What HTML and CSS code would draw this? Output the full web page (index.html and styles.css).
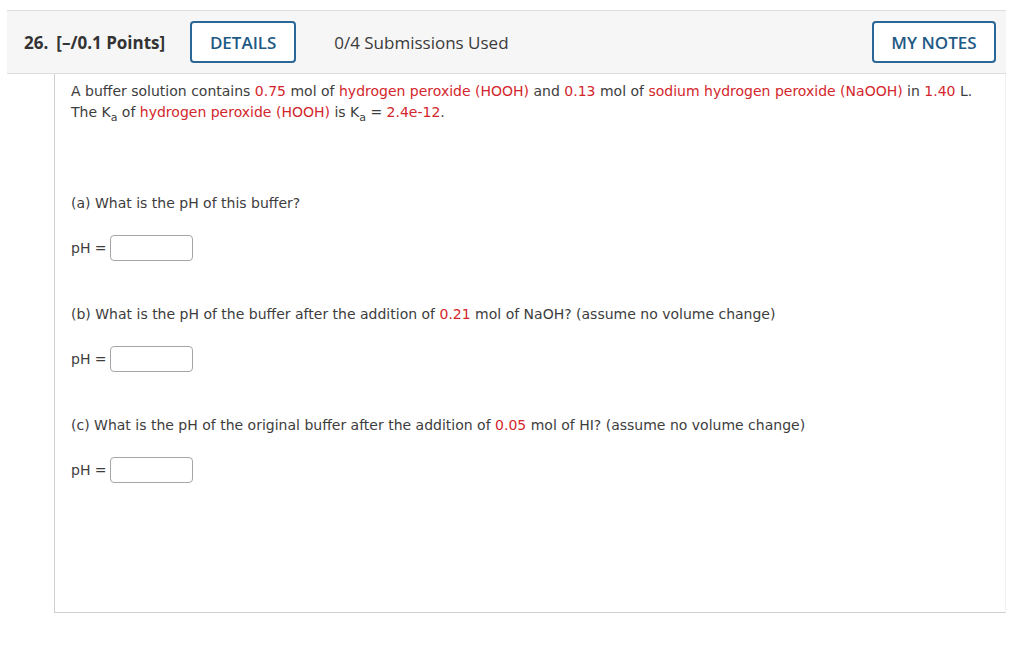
FILE: index.html
```html
<!DOCTYPE html>
<html>
<head>
<meta charset="utf-8">
<link rel="stylesheet" href="styles.css">
</head>
<body>
<div class="page">
  <div class="qhead">
    <span class="qnum">26.</span>
    <span class="points">[–/0.1 Points]</span>
    <button class="btn btn-details">DETAILS</button>
    <span class="subs">0/4 Submissions Used</span>
    <span class="spacer"></span>
    <button class="btn btn-notes">MY NOTES</button>
  </div>
  <div class="qbody">
    <p class="intro">A buffer solution contains <span class="r">0.75</span> mol of <span class="r">hydrogen peroxide (HOOH)</span> and <span class="r">0.13</span> mol of <span class="r">sodium hydrogen peroxide (NaOOH)</span> in <span class="r">1.40</span> L.<br>The K<sub>a</sub> of <span class="r">hydrogen peroxide (HOOH)</span> is K<sub>a</sub> = <span class="r">2.4e-12</span>.</p>

    <div class="part part-a">
      <p class="q">(a) What is the pH of this buffer?</p>
      <div class="ans"><span class="lbl">pH =</span><span class="box"></span></div>
    </div>
    <div class="part">
      <p class="q">(b) What is the pH of the buffer after the addition of <span class="r">0.21</span> mol of NaOH? (assume no volume change)</p>
      <div class="ans"><span class="lbl">pH =</span><span class="box"></span></div>
    </div>
    <div class="part">
      <p class="q">(c) What is the pH of the original buffer after the addition of <span class="r">0.05</span> mol of HI? (assume no volume change)</p>
      <div class="ans"><span class="lbl">pH =</span><span class="box"></span></div>
    </div>
  </div>
</div>
</body>
</html>
```

FILE: styles.css
```css
html, body {
  margin: 0;
  padding: 0;
  background: #ffffff;
}

.page {
  padding: 10px 18px 0 7px;
}

.qhead {
  display: flex;
  align-items: center;
  height: 62px;
  background: #f6f6f6;
  border-top: 1px solid #dedede;
  border-bottom: 1px solid #dedede;
  padding: 0 10px 0 17px;
  font-family: "Open Sans", "Liberation Sans", sans-serif;
  font-size: 17px;
  color: #333333;
}

.qnum {
  font-weight: 700;
  margin-right: 8px;
}

.points {
  font-weight: 700;
  margin-right: 25px;
}

.btn {
  font-family: "Open Sans", "Liberation Sans", sans-serif;
  font-size: 17px;
  font-weight: 600;
  color: #1f5a86;
  background: #ffffff;
  border: 2px solid #2a6796;
  border-radius: 4px;
  height: 42px;
  padding: 0;
  cursor: pointer;
}

.btn-details {
  width: 106px;
  margin-right: 38px;
}

.btn-notes {
  width: 124px;
}

.subs {
  font-weight: 400;
  color: #3a3a3a;
}

.spacer {
  flex: 1;
}

.qbody {
  margin-left: 47px;
  height: 539px;
  border-left: 1px solid #cfcfcf;
  border-bottom: 1px solid #cfcfcf;
  border-right: 1px solid #f2f2f2;
  padding: 7px 0 0 16px;
  box-sizing: border-box;
  font-family: "DejaVu Sans", Verdana, sans-serif;
  font-size: 14px;
  line-height: 21px;
  color: #3d3d3d;
}

.qbody p {
  margin: 0;
}

.r {
  color: #d3262c;
}

sub {
  font-size: 11px;
  line-height: 0;
  vertical-align: -4px;
}

.part-a {
  margin-top: 70px;
}

.part {
  margin-bottom: 43px;
}

.q {
  margin-bottom: 21px !important;
}

.ans {
  display: flex;
  align-items: center;
  height: 26px;
}

.lbl {
  margin-right: 3px;
}

.box {
  display: inline-block;
  width: 81px;
  height: 24px;
  border: 1px solid #a6a6a6;
  border-radius: 4px;
  background: #fff;
}
```
